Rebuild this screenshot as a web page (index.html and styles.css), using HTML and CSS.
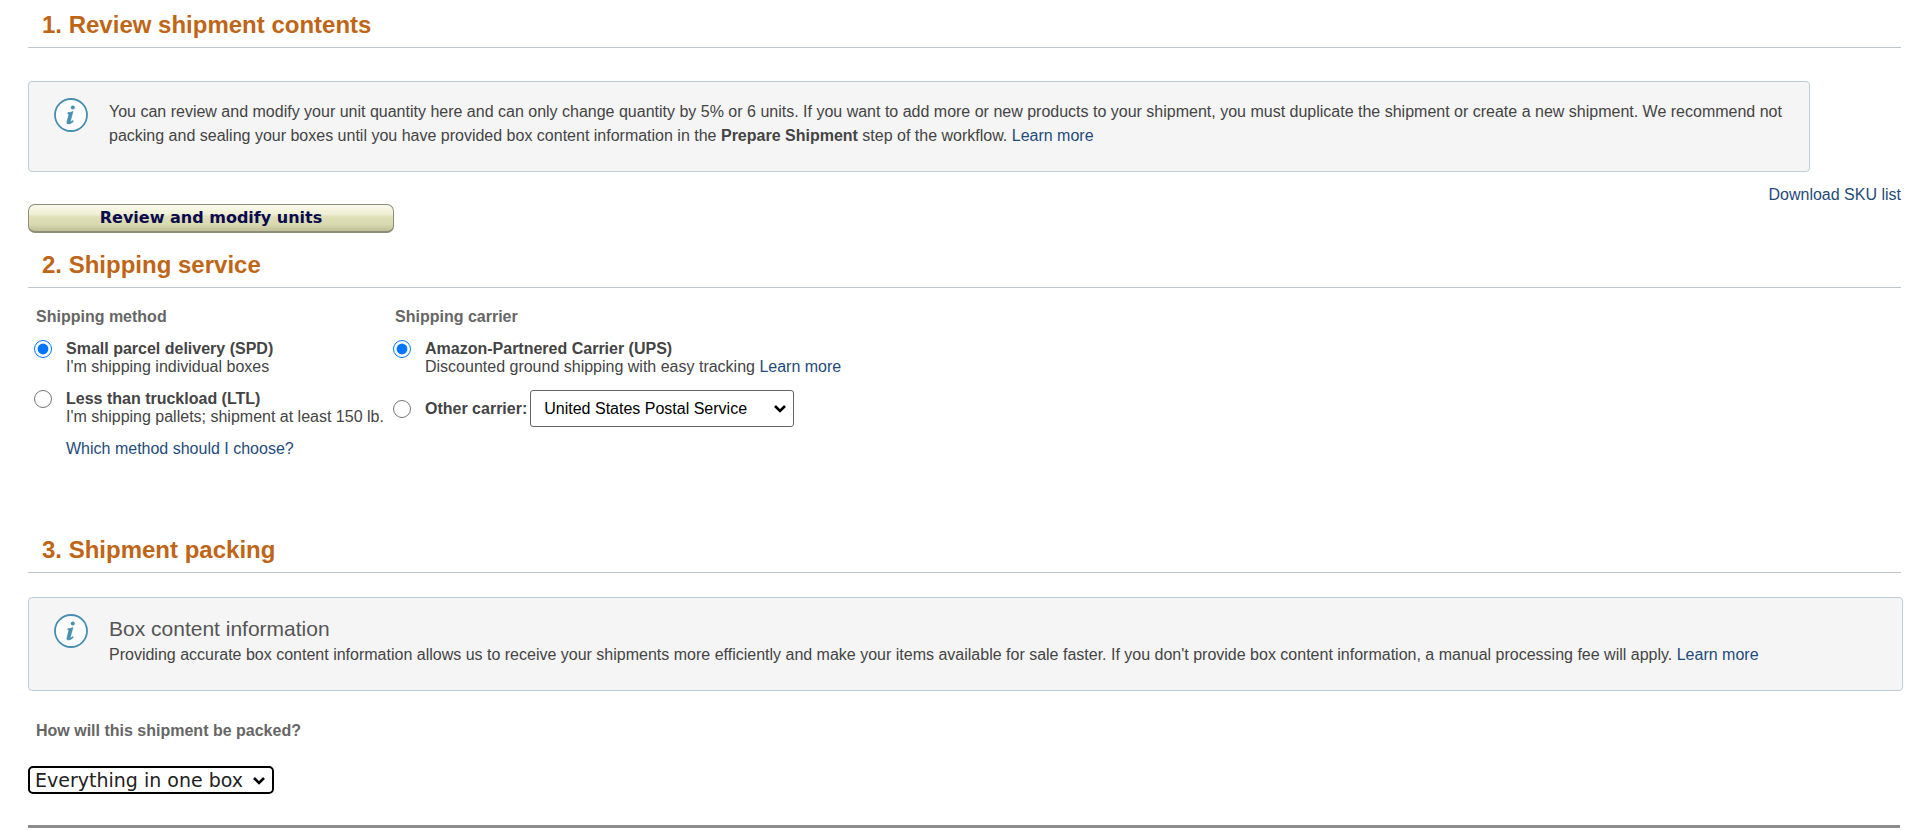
FILE: index.html
```html
<!DOCTYPE html>
<html lang="en">
<head>
<meta charset="utf-8">
<title>Shipment</title>
<link rel="stylesheet" href="styles.css">
</head>
<body>
<main class="page">
  <section class="contents">
    <h2 class="heading">1. Review shipment contents</h2>
    <div class="notice notice-short">
      <svg class="info-icon" viewBox="0 0 34 34" aria-hidden="true">
        <circle cx="17" cy="17" r="16" fill="#fff" stroke="#468fb0" stroke-width="1.800"/>
        <circle cx="18.800" cy="9.500" r="2" fill="#468fb0"/>
        <path d="M14 14.500q3 0 5-1l-2.600 9.500q-.3 1.500 2.600-.5l.3 1q-2.500 2.500-5 2.500-2 0-1.300-2.500l2-7.500-1.300-.3z" fill="#468fb0" stroke="#468fb0" stroke-width=".6"/>
      </svg>
      <p class="notice-text">You can review and modify your unit quantity here and can only change quantity by 5% or 6 units. If you want to add more or new products to your shipment, you must duplicate the shipment or create a new shipment. We recommend not packing and sealing your boxes until you have provided box content information in the <b>Prepare Shipment</b> step of the workflow. <a href="#">Learn more</a></p>
    </div>
    <div class="actions">
      <button type="button" class="units-button">Review and modify units</button>
      <a href="#">Download SKU list</a>
    </div>
  </section>

  <section class="service">
    <h2 class="heading">2. Shipping service</h2>
    <div class="options">
      <fieldset class="option-group">
        <legend class="label">Shipping method</legend>
        <div class="option">
          <input type="radio" name="method" id="spd" checked>
          <label for="spd"><b>Small parcel delivery (SPD)</b><br>I'm shipping individual boxes</label>
        </div>
        <div class="option">
          <input type="radio" name="method" id="ltl">
          <label for="ltl"><b>Less than truckload (LTL)</b><br>I'm shipping pallets; shipment at least 150 lb.</label>
        </div>
        <a class="help-link" href="#">Which method should I choose?</a>
      </fieldset>
      <fieldset class="option-group">
        <legend class="label">Shipping carrier</legend>
        <div class="option">
          <input type="radio" name="carrier" id="ups" checked>
          <div><label for="ups"><b>Amazon-Partnered Carrier (UPS)</b><br>Discounted ground shipping with easy tracking</label> <a href="#">Learn more</a></div>
        </div>
        <div class="option option-select">
          <input type="radio" name="carrier" id="other">
          <label for="other"><b>Other carrier:</b></label>
          <select class="carrier-select" aria-label="Other carrier"><option>United States Postal Service</option></select>
        </div>
      </fieldset>
    </div>
  </section>

  <section class="packing">
    <h2 class="heading">3. Shipment packing</h2>
    <div class="notice notice-full">
      <svg class="info-icon" viewBox="0 0 34 34" aria-hidden="true">
        <circle cx="17" cy="17" r="16" fill="#fff" stroke="#468fb0" stroke-width="1.800"/>
        <circle cx="18.800" cy="9.500" r="2" fill="#468fb0"/>
        <path d="M14 14.500q3 0 5-1l-2.600 9.500q-.3 1.500 2.600-.5l.3 1q-2.500 2.500-5 2.500-2 0-1.300-2.500l2-7.500-1.300-.3z" fill="#468fb0" stroke="#468fb0" stroke-width=".6"/>
      </svg>
      <div class="notice-body">
        <h3 class="notice-title">Box content information</h3>
        <p class="notice-line">Providing accurate box content information allows us to receive your shipments more efficiently and make your items available for sale faster. If you don't provide box content information, a manual processing fee will apply. <a href="#">Learn more</a></p>
      </div>
    </div>
    <label class="label question" for="packed">How will this shipment be packed?</label>
    <select class="packed-select" id="packed"><option>Everything in one box</option></select>
  </section>
  <hr class="end-rule">
</main>
</body>
</html>
```
FILE: styles.css
```css
* {
  box-sizing: border-box;
}

body {
  margin: 0;
  background: #fff;
  color: #444;
  font: 16px/18px "Liberation Sans", Arial, sans-serif;
}

.page {
  padding: 2px 19px 0 28px;
}

a {
  color: #1f4b7b;
  text-decoration: none;
}

.heading {
  margin: 0;
  padding: 9px 14px 8px;
  border-bottom: 1px solid #bfc6cc;
  color: #bf6516;
  font-size: 24px;
  line-height: 28px;
}

.notice {
  display: flex;
  gap: 21px;
  padding: 16px 25px;
  border: 1px solid #bccddb;
  border-radius: 4px;
  background: #f5f5f5;
}

.notice-short {
  min-height: 91px;
  margin: 33px 91px 0 0;
}

.notice-full {
  min-height: 94px;
  margin: 24px -2px 0 0;
}

.info-icon {
  flex: none;
  width: 34px;
  height: 34px;
}

.notice-text {
  margin: 2px 0 0;
  line-height: 24px;
}

.notice-title {
  margin: 3px 0 0;
  color: #555;
  font-size: 21px;
  font-weight: normal;
  line-height: 24px;
}

.notice-line {
  margin: 2px 0 0;
  line-height: 24px;
}

.actions {
  display: flex;
  align-items: flex-start;
  justify-content: space-between;
  padding-top: 14px;
}

.units-button {
  width: 366px;
  height: 29px;
  margin-top: 18px;
  padding: 0;
  border: 1px solid #8e8e78;
  border-bottom-width: 2px;
  border-radius: 7px;
  background: linear-gradient(#fafaec 0, #efefd4 35%, #e0e0b8 45%, #d9d9b0 75%, #c0c098);
  color: #0a0a50;
  font: bold 16px/20px Verdana, "DejaVu Sans", sans-serif;
}

.service {
  padding-top: 9px;
}

.options {
  display: flex;
  padding: 20px 6px 0;
}

.option-group {
  min-width: 359px;
  margin: 0;
  padding: 0;
  border: 0;
}

.label {
  padding: 0 2px;
  color: #666;
  font-weight: bold;
}

.option {
  display: flex;
  gap: 14px;
  padding-top: 14px;
}

.option input {
  flex: none;
  width: 18px;
  height: 18px;
  margin: 0;
}

.option-select {
  align-items: center;
  padding-top: 14px;
}

.option-select label {
  margin-right: -11px;
}

.carrier-select,
.packed-select {
  appearance: none;
  background: #fff url("data:image/svg+xml,%3Csvg xmlns='http://www.w3.org/2000/svg' width='14' height='9' viewBox='0 0 14 9'%3E%3Cpath d='M2 2l5 5 5-5' fill='none' stroke='%23000' stroke-width='2.600'/%3E%3C/svg%3E") no-repeat right 6px center;
}

.carrier-select {
  width: 264px;
  height: 37px;
  padding: 0 24px 0 13px;
  border: 1px solid #666;
  border-radius: 3px;
  color: #000;
  font: inherit;
}

.help-link {
  display: block;
  margin: 14px 0 0 32px;
}

.packing {
  padding-top: 69px;
}

.question {
  display: block;
  margin: 31px 6px 26px;
}

.packed-select {
  display: block;
  width: 246px;
  height: 28px;
  padding: 0 20px 0 5px;
  border: 2px solid #000;
  border-radius: 5px;
  color: #222;
  font: 19px/22px Verdana, "DejaVu Sans", sans-serif;
}

.end-rule {
  height: 3px;
  margin: 31px 1px 0 0;
  border: 0;
  background: #8c8c8c;
}
```
